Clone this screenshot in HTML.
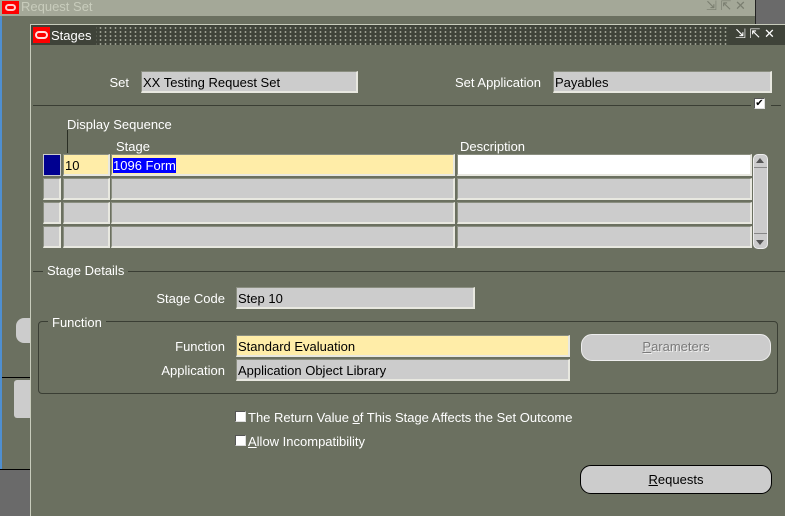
<!DOCTYPE html>
<html><head><meta charset="utf-8"><style>
*{margin:0;padding:0;box-sizing:border-box}
body{width:785px;height:516px;overflow:hidden;background:#6b7060;font-family:"Liberation Sans",sans-serif;font-size:13px;color:#fff;position:relative}
.a{position:absolute}
.f{position:absolute;background:#cccccc;color:#000;border-top:1px solid #8a8e80;border-left:1px solid #8a8e80;border-right:2px solid #e8e8e0;border-bottom:2px solid #e8e8e0;padding:3px 1px 0;line-height:15px;white-space:nowrap;overflow:hidden}
.y{background:#ffeda8}
.w{background:#fff}
.lbl{position:absolute;white-space:nowrap;line-height:14px}
.r{text-align:right}
.btn{position:absolute;background:#cccccc;border:1px solid #000;border-radius:11px;color:#000;text-align:center;line-height:24px}
.cb{position:absolute;width:11px;height:11px;background:#fff;border-top:1px solid #555;border-left:1px solid #555;border-right:1px solid #ddd;border-bottom:1px solid #ddd}
</style></head><body>
<div class="a" style="left:0;top:0;width:755px;height:16px;background:#a4a898"></div>
<div class="a" style="left:2px;top:1px;width:17px;height:13px;background:#f00"><div class="a" style="left:3px;top:3px;width:11px;height:7px;border:2px solid #fcc;border-radius:4px"></div></div>
<div class="lbl" style="left:21px;top:0;color:#c8ccbc">Request Set</div>
<div class="lbl" style="left:706px;top:-1px;color:#7a7e70;font-size:13px">⇲ ⇱ ✕</div>
<div class="a" style="left:755px;top:0;width:30px;height:24px;background:#6a6a6a;border-left:1px solid #222"></div>
<div class="a" style="left:0;top:16px;width:2px;height:500px;background:#4f8fd0"></div>
<div class="a" style="left:0;top:469px;width:30px;height:47px;background:#6a6a6a;border-top:1px solid #000"></div>
<div class="a" style="left:2px;top:377px;width:28px;height:1px;background:#000"></div>
<div class="a" style="left:16px;top:318px;width:16px;height:25px;background:#ccc;border-radius:8px 0 0 8px"></div>
<div class="a" style="left:14px;top:380px;width:16px;height:38px;background:#ccc;border-radius:3px 0 0 3px"></div>
<div class="a" style="left:30px;top:24px;width:755px;height:492px;background:#6b7060;border-left:1px solid #c8ccbc;border-top:1px solid #c8ccbc"></div>
<div class="a" style="left:31px;top:25px;width:754px;height:20px;background:#3f4339;background-image:radial-gradient(circle,#9a9e90 0.8px,transparent 1px);background-size:5px 4px;background-position:67px 1px"></div>
<div class="a" style="left:31px;top:25px;width:65px;height:20px;background:#3f4339"></div>
<div class="a" style="left:728px;top:25px;width:57px;height:20px;background:#3f4339"></div>
<div class="a" style="left:33px;top:27px;width:17px;height:16px;background:#f00"><div class="a" style="left:2px;top:4px;width:13px;height:8px;border:2px solid #fdd;border-radius:5px"></div></div>
<div class="lbl" style="left:51px;top:29px;font-size:13px">Stages</div>
<div class="lbl" style="left:735px;top:27px;font-size:13px">⇲ ⇱ ✕</div>

<div class="lbl r" style="left:80px;top:76px;width:49px">Set</div>
<div class="f" style="left:141px;top:71px;width:217px;height:22px">XX Testing Request Set</div>
<div class="lbl r" style="left:400px;top:76px;width:141px">Set Application</div>
<div class="f" style="left:553px;top:71px;width:219px;height:22px">Payables</div>
<div class="a" style="left:33px;top:105px;width:718px;height:1px;background:#3a3e34"></div>
<div class="a" style="left:771px;top:105px;width:10px;height:1px;background:#3a3e34"></div>
<div class="cb" style="left:754px;top:98px;font-size:10px;line-height:9px;color:#000;text-align:center">✔</div>

<div class="lbl" style="left:67px;top:118px">Display Sequence</div>
<div class="a" style="left:67px;top:130px;width:1px;height:23px;background:#2a2e24"></div>
<div class="lbl" style="left:116px;top:140px">Stage</div>
<div class="lbl" style="left:460px;top:140px">Description</div>

<div class="a" style="left:43px;top:154px;width:18px;height:22px;background:#000090;border:1px solid #ccc"></div>
<div class="f y" style="left:63px;top:154px;width:47px;height:22px">10</div>
<div class="f y" style="left:111px;top:154px;width:344px;height:22px"><span style="background:#0000ff;color:#fff">1096 Form</span></div>
<div class="f w" style="left:457px;top:154px;width:295px;height:22px"></div>

<div class="f" style="left:43px;top:178px;width:18px;height:22px"></div>
<div class="f" style="left:63px;top:178px;width:47px;height:22px"></div>
<div class="f" style="left:111px;top:178px;width:344px;height:22px"></div>
<div class="f" style="left:457px;top:178px;width:295px;height:22px"></div>
<div class="f" style="left:43px;top:202px;width:18px;height:22px"></div>
<div class="f" style="left:63px;top:202px;width:47px;height:22px"></div>
<div class="f" style="left:111px;top:202px;width:344px;height:22px"></div>
<div class="f" style="left:457px;top:202px;width:295px;height:22px"></div>
<div class="f" style="left:43px;top:226px;width:18px;height:22px"></div>
<div class="f" style="left:63px;top:226px;width:47px;height:22px"></div>
<div class="f" style="left:111px;top:226px;width:344px;height:22px"></div>
<div class="f" style="left:457px;top:226px;width:295px;height:22px"></div>
<div class="a" style="left:753px;top:154px;width:15px;height:95px;background:#cccccc;border:1px solid #eee;border-radius:5px"></div>
<div class="a" style="left:756px;top:158px;width:0;height:0;border-left:4px solid transparent;border-right:4px solid transparent;border-bottom:5px solid #555"></div>
<div class="a" style="left:756px;top:240px;width:0;height:0;border-left:4px solid transparent;border-right:4px solid transparent;border-top:5px solid #555"></div>
<div class="a" style="left:754px;top:167px;width:13px;height:1px;background:#888"></div>
<div class="a" style="left:754px;top:233px;width:13px;height:1px;background:#888"></div>

<div class="a" style="left:33px;top:271px;width:752px;height:1px;background:#3a3e34"></div>
<div class="lbl" style="left:43px;top:264px;background:#6b7060;padding:0 4px">Stage Details</div>
<div class="lbl r" style="left:100px;top:292px;width:125px">Stage Code</div>
<div class="f" style="left:236px;top:287px;width:239px;height:22px">Step 10</div>

<div class="a" style="left:38px;top:321px;width:740px;height:73px;border:1px solid #3a3e34;border-radius:4px"></div>
<div class="lbl" style="left:48px;top:316px;background:#6b7060;padding:0 4px">Function</div>
<div class="lbl r" style="left:100px;top:340px;width:125px">Function</div>
<div class="f y" style="left:236px;top:335px;width:334px;height:22px">Standard Evaluation</div>
<div class="btn" style="left:581px;top:334px;width:190px;height:27px;border-color:#eee;color:#7a7a7a;text-shadow:1px 1px 0 #eee"><u>P</u>arameters</div>
<div class="lbl r" style="left:100px;top:364px;width:125px">Application</div>
<div class="f" style="left:236px;top:359px;width:334px;height:22px">Application Object Library</div>

<div class="cb" style="left:235px;top:411px"></div>
<div class="lbl" style="left:248px;top:411px">The Return Value <u>o</u>f This Stage Affects the Set Outcome</div>
<div class="cb" style="left:235px;top:435px"></div>
<div class="lbl" style="left:248px;top:435px"><u>A</u>llow Incompatibility</div>

<div class="btn" style="left:580px;top:465px;width:192px;height:29px;line-height:27px"><u>R</u>equests</div>
</body></html>
